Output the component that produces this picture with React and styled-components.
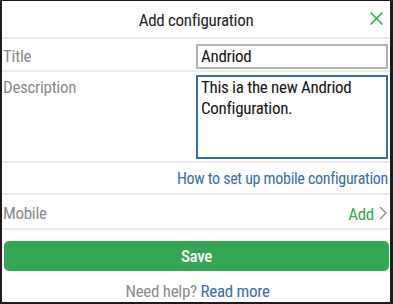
import React from "react";
import styled, { createGlobalStyle } from "styled-components";

const Global = createGlobalStyle`
  html, body { margin: 0; padding: 0; background: #fff; }
  body { font-family: Roboto, "Noto Sans", sans-serif; }
  * { box-sizing: border-box; }
`;

const Frame = styled.div`
  width: 393px;
  height: 304px;
  border-style: solid;
  border-color: #1c1c1c;
  border-width: 1px 3px 2px 2px;
  background: #fff;
  display: flex;
  flex-direction: column;
  overflow: hidden;
  font-family: Roboto, sans-serif;
  font-size: 17px;
  font-stretch: 80%;
  letter-spacing: -0.3px;
`;

const Header = styled.div`
  position: relative;
  height: 38px;
  flex: none;
  display: flex;
  align-items: center;
  justify-content: center;
  border-bottom: 2px solid #ececec;
`;

const HeaderTitle = styled.div`
  color: #1e1e1e;
  font-size: 17px;
  line-height: 20px;
  padding-top: 1px;
`;

const CloseBtn = styled.button`
  position: absolute;
  right: 6px;
  top: 10px;
  width: 15px;
  height: 15px;
  padding: 0;
  border: 0;
  background: none;
  display: flex;
`;

const Row = styled.div`
  display: flex;
  align-items: ${(p) => (p.$top ? "flex-start" : "center")};
  justify-content: space-between;
  height: ${(p) => p.$h}px;
  flex: none;
  padding: ${(p) => p.$pad || "0 2px 0 1px"};
  border-bottom: 2px solid #ececec;
`;

const Label = styled.div`
  color: #8a8a8a;
  line-height: 21px;
  padding-top: ${(p) => p.$pt || 0}px;
`;

const TextInput = styled.div`
  width: 192px;
  height: 25px;
  border: 2px solid #b4b4b4;
  padding: 0 3px;
  color: #141414;
  line-height: 21px;
`;

const TextArea = styled.div`
  width: 192px;
  height: 84px;
  border: 2px solid #3a6aa8;
  padding: 0 3px;
  color: #141414;
  line-height: 21px;
`;

const LinkText = styled.span`
  color: #3a6ea8;
  font-size: ${(p) => p.$size || 17}px;
`;

const RightRow = styled(Row)`
  justify-content: flex-end;
`;

const AddGroup = styled.div`
  display: flex;
  align-items: center;
  gap: 4px;
`;

const AddText = styled.span`
  color: #34a853;
  padding-top: 2px;
`;

const SaveButton = styled.button`
  margin: 11px 1px 0 2px;
  height: 30px;
  flex: none;
  border: 0;
  border-radius: 5px;
  background: #35a655;
  color: #fff;
  font-family: Roboto, sans-serif;
  font-stretch: 80%;
  letter-spacing: -0.3px;
  font-size: 17px;
  font-weight: 500;
`;

const Help = styled.div`
  text-align: center;
  margin-top: 10px;
  color: #8a8a8a;
  line-height: 20px;
  padding-left: 3px;
`;

export default function App() {
  return (
    <>
      <Global />
      <Frame>
        <Header>
          <HeaderTitle>Add configuration</HeaderTitle>
          <CloseBtn aria-label="Close">
            <svg width="15" height="15" viewBox="0 0 15 15">
              <path d="M1.5 1.5 L13.5 13.5 M13.5 1.5 L1.5 13.5" stroke="#34a853" strokeWidth="1.6" fill="none" />
            </svg>
          </CloseBtn>
        </Header>
        <Row $h={33} $pad="3px 2px 0 1px">
          <Label>Title</Label>
          <TextInput>Andriod</TextInput>
        </Row>
        <Row $h={91} $top $pad="3px 2px 0 1px">
          <Label $pt={2}>Description</Label>
          <TextArea>This ia the new Andriod Configuration.</TextArea>
        </Row>
        <RightRow $h={32}>
          <LinkText $size={16}>How to set up mobile configuration</LinkText>
        </RightRow>
        <Row $h={35} $pad="3px 2px 0 1px">
          <Label>Mobile</Label>
          <AddGroup>
            <AddText>Add</AddText>
            <svg width="10" height="14" viewBox="0 0 10 14">
              <path d="M2 1 L8 7 L2 13" stroke="#8a8a8a" strokeWidth="1.3" fill="none" />
            </svg>
          </AddGroup>
        </Row>
        <SaveButton>Save</SaveButton>
        <Help>
          Need help? <LinkText>Read more</LinkText>
        </Help>
      </Frame>
    </>
  );
}
